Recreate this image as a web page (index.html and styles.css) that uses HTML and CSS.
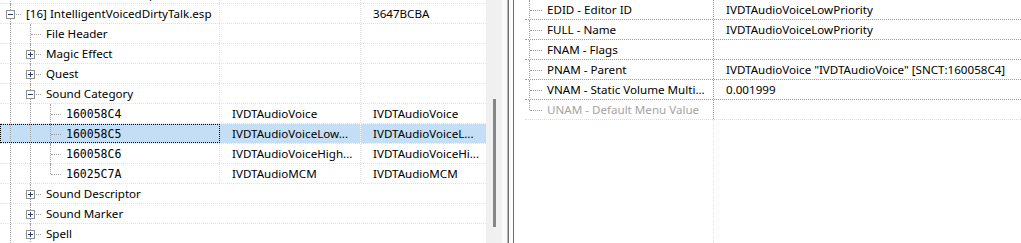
FILE: index.html
```html
<!DOCTYPE html>
<html>
  <head>
    <meta charset="UTF-8">
    <title>IntelligentVoicedDirtyTalk.esp</title>
    <link rel="stylesheet" href="styles.css">
  </head>
  <body>
    <div class="ventana">

      <div class="arbol">
        <div class="lista">
          <div class="fila">
            <div class="nodo"><i class="union"></i><span class="texto">[15] SexLabAroused.esp</span></div>
            <div class="celda"></div><div class="celda ult"></div>
          </div>
          <div class="fila">
            <div class="nodo"><i class="union"><b class="caja menos"></b></i><span class="texto">[16] IntelligentVoicedDirtyTalk.esp</span></div>
            <div class="celda"></div><div class="celda ult">3647BCBA</div>
          </div>
          <div class="fila">
            <div class="nodo"><i class="guia"></i><i class="union"></i><span class="texto">File Header</span></div>
            <div class="celda"></div><div class="celda ult"></div>
          </div>
          <div class="fila">
            <div class="nodo"><i class="guia"></i><i class="union"><b class="caja mas"></b></i><span class="texto">Magic Effect</span></div>
            <div class="celda"></div><div class="celda ult"></div>
          </div>
          <div class="fila">
            <div class="nodo"><i class="guia"></i><i class="union"><b class="caja mas"></b></i><span class="texto">Quest</span></div>
            <div class="celda"></div><div class="celda ult"></div>
          </div>
          <div class="fila">
            <div class="nodo"><i class="guia"></i><i class="union"><b class="caja menos"></b></i><span class="texto">Sound Category</span></div>
            <div class="celda"></div><div class="celda ult"></div>
          </div>
          <div class="fila">
            <div class="nodo"><i class="guia"></i><i class="guia"></i><i class="union"></i><span class="texto id">160058C4</span></div>
            <div class="celda">IVDTAudioVoice</div><div class="celda ult">IVDTAudioVoice</div>
          </div>
          <div class="fila sel">
            <div class="nodo"><i class="guia"></i><i class="guia"></i><i class="union"></i><span class="texto id">160058C5</span></div>
            <div class="celda">IVDTAudioVoiceLow...</div><div class="celda ult">IVDTAudioVoiceL...</div>
          </div>
          <div class="fila">
            <div class="nodo"><i class="guia"></i><i class="guia"></i><i class="union"></i><span class="texto id">160058C6</span></div>
            <div class="celda">IVDTAudioVoiceHigh...</div><div class="celda ult">IVDTAudioVoiceHi...</div>
          </div>
          <div class="fila">
            <div class="nodo"><i class="guia"></i><i class="guia"></i><i class="union final"></i><span class="texto id">16025C7A</span></div>
            <div class="celda">IVDTAudioMCM</div><div class="celda ult">IVDTAudioMCM</div>
          </div>
          <div class="fila grupo">
            <div class="nodo"><i class="guia"></i><i class="union"><b class="caja mas"></b></i><span class="texto">Sound Descriptor</span></div>
            <div class="celda"></div><div class="celda ult"></div>
          </div>
          <div class="fila grupo">
            <div class="nodo"><i class="guia"></i><i class="union"><b class="caja mas"></b></i><span class="texto">Sound Marker</span></div>
            <div class="celda"></div><div class="celda ult"></div>
          </div>
          <div class="fila grupo">
            <div class="nodo"><i class="guia"></i><i class="union"><b class="caja mas"></b></i><span class="texto">Spell</span></div>
            <div class="celda"></div><div class="celda ult"></div>
          </div>
        </div>
      </div>

      <div class="barra"><div class="pulgar"></div></div>

      <div class="divisor"><i class="linea1"></i><i class="linea2"></i><i class="linea3"></i></div>

      <div class="vista">
        <div class="prop">
          <div class="pnombre"><i class="punion"></i>EDID - Editor ID</div>
          <div class="pvalor">IVDTAudioVoiceLowPriority</div>
        </div>
        <div class="prop">
          <div class="pnombre"><i class="punion"></i>FULL - Name</div>
          <div class="pvalor">IVDTAudioVoiceLowPriority</div>
        </div>
        <div class="prop">
          <div class="pnombre"><i class="punion"></i>FNAM - Flags</div>
          <div class="pvalor"></div>
        </div>
        <div class="prop">
          <div class="pnombre"><i class="punion"></i>PNAM - Parent</div>
          <div class="pvalor">IVDTAudioVoice "IVDTAudioVoice" [SNCT:160058C4]</div>
        </div>
        <div class="prop">
          <div class="pnombre"><i class="punion"></i>VNAM - Static Volume Multi...</div>
          <div class="pvalor">0.001999</div>
        </div>
        <div class="prop vacio">
          <div class="pnombre"><i class="punion final"></i>UNAM - Default Menu Value</div>
          <div class="pvalor"></div>
        </div>
        <div class="resto"><div class="pnombre"></div></div>
      </div>

    </div>
  </body>
</html>
```

FILE: styles.css
```css
html, body {
  margin: 0;
  background: #fff;
}

body {
  font-family: "Noto Sans", "Open Sans", sans-serif;
  font-size: 11.6px;
  color: #000;
}

.ventana {
  display: flex;
  height: 243px;
  overflow: hidden;
}

/* arbol de la izquierda */

.arbol {
  width: 486px;
  flex: none;
  overflow: hidden;
}

.lista {
  margin-top: -16px;
}

.fila {
  display: flex;
  height: 19px;
  border-bottom: 1px dotted #e2e2e2;
  line-height: 18px;
  white-space: nowrap;
}

.nodo {
  display: flex;
  width: 219px;
  flex: none;
  border-right: 1px dotted #e2e2e2;
}

.celda {
  width: 128px;
  height: 18px;
  flex: none;
  padding: 1px 0 0 12px;
  border-right: 1px dotted #e2e2e2;
  overflow: hidden;
}

.celda.ult {
  width: 113px;
  border-right: none;
}

.grupo .nodo,
.grupo .celda {
  border-right-color: transparent;
}

.sel .nodo {
  background: #c4dff5;
  outline: 1px dotted #000;
  outline-offset: -1px;
}

.sel .celda {
  background: #c4dff5;
  border-right-color: #fff;
}

.guia {
  width: 20px;
  flex: none;
  background: linear-gradient(#a0a0a0 50%, transparent 50%) 10px 0 / 1px 2px repeat-y;
}

.union {
  position: relative;
  width: 20px;
  flex: none;
  display: flex;
  align-items: center;
  justify-content: center;
}

.union::before {
  content: "";
  position: absolute;
  left: 10px;
  top: 0;
  bottom: -1px;
  border-left: 1px dotted #a0a0a0;
}

.union.final::before {
  bottom: 9px;
}

.union::after {
  content: "";
  position: absolute;
  left: 11px;
  width: 10px;
  top: 10px;
  border-top: 1px dotted #a0a0a0;
}

.caja {
  position: relative;
  z-index: 1;
  width: 7px;
  height: 7px;
  margin: 1px 0 0 1px;
  border: 1px solid #919191;
  background: #fff;
  display: flex;
  align-items: center;
  justify-content: center;
}

.caja::before {
  content: "";
  width: 5px;
  height: 1px;
  background: #2b3d6b;
}

.caja.mas::after {
  content: "";
  position: absolute;
  left: 3px;
  top: 1px;
  width: 1px;
  height: 5px;
  background: #2b3d6b;
}

.texto {
  padding: 1px 0 0 6px;
}

.id {
  font-family: "DejaVu Sans Mono", "Liberation Mono", monospace;
  font-size: 11.5px;
  padding-left: 6px;
}

/* barra de desplazamiento y divisor */

.barra {
  width: 16px;
  flex: none;
  background: #f0f0f0;
  padding-top: 99px;
}

.pulgar {
  width: 3px;
  height: 128px;
  margin-left: 7px;
  background: #868686;
}

.divisor {
  display: flex;
  width: 12px;
  flex: none;
  background: #f9f9f9;
}

.linea1 {
  width: 5px;
}

.linea2 {
  width: 1px;
  background: #b4b4b4;
  border-right: 1px solid #6e6e6e;
}

.linea3 {
  width: 4px;
  background: #fbfbfb;
  border-right: 1px solid #6e6e6e;
}

/* vista de registro */

.vista {
  flex: 1;
  display: flex;
  flex-direction: column;
  background: #fff;
}

.prop {
  display: flex;
  height: 19px;
  line-height: 18px;
  margin-left: 11px;
  border-bottom: 1px dotted #9a9a9a;
  white-space: nowrap;
}

.prop.vacio {
  border-bottom-color: #dedede;
  color: #a3a3a3;
}

.pnombre {
  display: flex;
  width: 188px;
  height: 18px;
  padding-top: 1px;
  flex: none;
  border-right: 1px dotted #9a9a9a;
  overflow: hidden;
}

.pvalor {
  padding: 1px 0 0 12px;
  overflow: hidden;
}

.punion {
  position: relative;
  width: 22px;
  margin-top: -1px;
  flex: none;
}

.punion::before {
  content: "";
  position: absolute;
  left: 4px;
  top: 0;
  bottom: -1px;
  border-left: 1px dotted #9a9a9a;
}

.punion.final::before {
  bottom: 9px;
}

.punion::after {
  content: "";
  position: absolute;
  left: 5px;
  width: 12px;
  top: 10px;
  border-top: 1px dotted #9a9a9a;
}

.resto {
  flex: 1;
  margin-left: 11px;
}

.resto .pnombre {
  height: 100%;
  padding-top: 0;
  border-right-color: #e2e2e2;
}
```
